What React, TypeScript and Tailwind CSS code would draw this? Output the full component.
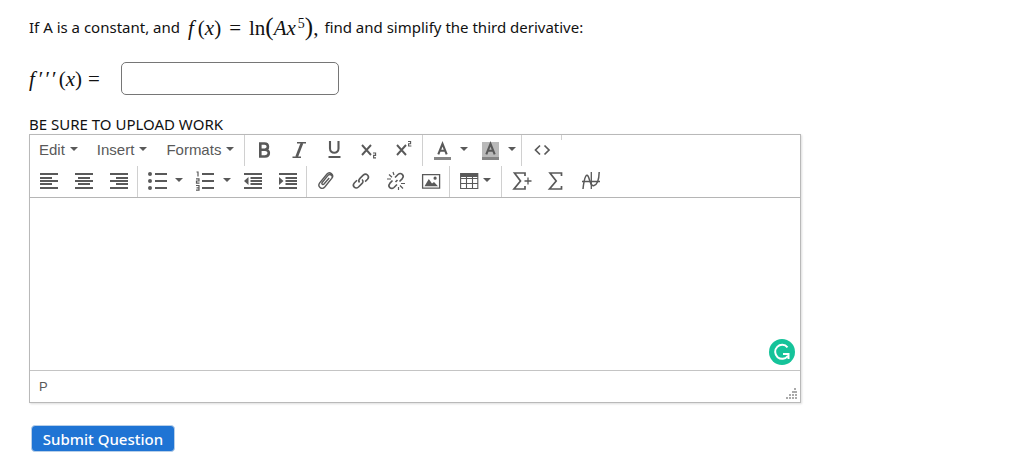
import React, { useState } from 'react';

type ToolProps = {
  label: string;
  children: React.ReactNode;
  dropdown?: boolean;
};

const Caret: React.FC = () => (
  <svg width="8" height="4" viewBox="0 0 8 4" className="mb-0.5 shrink-0 fill-[#595959]">
    <path d="M0 0h8L4 4z" />
  </svg>
);

const Icon: React.FC<{ children: React.ReactNode }> = ({ children }) => (
  <svg width="20" height="20" viewBox="0 0 20 20" fill="none" stroke="#595959" className="shrink-0">
    {children}
  </svg>
);

const Tool: React.FC<ToolProps> = ({ label, children, dropdown }) => (
  <button
    type="button"
    aria-label={label}
    className={
      dropdown
        ? 'flex h-[30px] w-12 items-center gap-2 pl-2'
        : 'flex h-[30px] w-[35px] items-center justify-center'
    }
  >
    {children}
    {dropdown && <Caret />}
  </button>
);

const Menu: React.FC<{ label: string }> = ({ label }) => (
  <button type="button" className="flex h-[30px] items-center gap-[5px] text-[15px] leading-5 text-[#595959]">
    {label}
    <Caret />
  </button>
);

const Group: React.FC<{ children: React.ReactNode; last?: boolean }> = ({ children, last }) => (
  <div className={last ? 'flex px-0.5' : 'flex border-r border-[#d0d0d0] px-px'}>{children}</div>
);

const Lines: React.FC<{ d: string }> = ({ d }) => (
  <Icon>
    <path d={d} strokeWidth="2" />
  </Icon>
);

const Toolbar: React.FC = () => (
  <div className="border-b border-[#b5b5b5] font-['Liberation_Sans',Arial,sans-serif]">
    <div className="flex h-[31px]">
      <div className="flex gap-[19px] border-r border-[#d0d0d0] pr-[10px] pl-[9px]">
        <Menu label="Edit" />
        <Menu label="Insert" />
        <Menu label="Formats" />
      </div>
      <Group>
        <Tool label="Bold">
          <Icon>
            <path d="M6 3.5h4.5c4.5 0 4.5 6 .4 6.2M6 9.7h5c5.2 0 5 6.8 0 6.8H6M6.3 2.2v15.6" strokeWidth="2.6" />
          </Icon>
        </Tool>
        <Tool label="Italic">
          <Icon>
            <path d="M8 2.7h9M3.5 17.2H12" strokeWidth="1.4" />
            <path d="M13 3L7.6 17" strokeWidth="2.7" />
          </Icon>
        </Tool>
        <Tool label="Underline">
          <Icon>
            <path d="M6 1v7.5c0 5.6 8.5 5.6 8.5 0V1" strokeWidth="2.1" />
            <path d="M4.5 17h12" strokeWidth="2" />
          </Icon>
        </Tool>
        <Tool label="Subscript">
          <Icon>
            <path d="M3 5l9 10M12 5L3 15" strokeWidth="1.9" />
            <path d="M14 13h2.6v2.4h-2v2.5H17" strokeWidth="1.1" />
          </Icon>
        </Tool>
        <Tool label="Superscript">
          <Icon>
            <path d="M3 5l9 10M12 5L3 15" strokeWidth="1.9" />
            <path d="M14 1.5h2.6v2.2h-2v2.3h2.8" strokeWidth="1.1" />
          </Icon>
        </Tool>
      </Group>
      <Group>
        <Tool label="Text color" dropdown>
          <Icon>
            <path d="M6.3 14.3l4.2-10.5 4.2 10.5M8 10.8h5" strokeWidth="2.1" />
            <path d="M2 18.5h17" stroke="#858585" strokeWidth="3" />
          </Icon>
        </Tool>
        <Tool label="Background color" dropdown>
          <Icon>
            <path d="M2 2h17v15H2z" fill="#b9b9b9" stroke="none" />
            <path d="M6.3 14.3l4.2-10.5 4.2 10.5M8 10.8h5" strokeWidth="2.1" />
            <path d="M2 18.5h17" stroke="#858585" strokeWidth="3" />
          </Icon>
        </Tool>
      </Group>
      <Group last>
        <Tool label="Source code">
          <Icon>
            <path d="M8 5.5L3.5 10 8 14.5M12.5 5.5L17 10l-4.5 4.5" strokeWidth="1.7" />
          </Icon>
        </Tool>
      </Group>
      <div className="h-[5px] border-l border-[#d0d0d0]" />
    </div>
    <div className="flex h-[31px]">
      <Group>
        <Tool label="Align left">
          <Lines d="M1 3h18M1 7h12M1 10h18M1 13h12M1 17h18" />
        </Tool>
        <Tool label="Align center">
          <Lines d="M1 3h18M4 7h12M1 10h18M4 13h12M1 17h18" />
        </Tool>
        <Tool label="Align right">
          <Lines d="M1 3h18M7 7h12M1 10h18M7 13h12M1 17h18" />
        </Tool>
      </Group>
      <Group>
        <Tool label="Bullet list" dropdown>
          <Icon>
            <path d="M8 3h12M8 10h12M8 17h12" strokeWidth="2" />
            <path d="M1 3a2 2 0 104 0 2 2 0 10-4 0M1 10a2 2 0 104 0 2 2 0 10-4 0M1 17a2 2 0 104 0 2 2 0 10-4 0" fill="#595959" stroke="none" />
          </Icon>
        </Tool>
        <Tool label="Numbered list" dropdown>
          <Icon>
            <path d="M7 3h12M7 10h12M7 17h12" strokeWidth="2" />
            <path d="M1.5 1H3v4.5M1 7.8h3v2.2H1.5v2.2H4.5M1 14.5h3v4.6H1M1.5 16.8h2.5" strokeWidth="1.2" />
          </Icon>
        </Tool>
        <Tool label="Decrease indent">
          <Icon>
            <path d="M1 3h18M7.5 7H19M7.5 10H19M7.5 13H19M1 17h18" strokeWidth="2" />
            <path d="M5.5 6v8L1 10z" fill="#595959" stroke="none" />
          </Icon>
        </Tool>
        <Tool label="Increase indent">
          <Icon>
            <path d="M1 3h18M7.5 7H19M7.5 10H19M7.5 13H19M1 17h18" strokeWidth="2" />
            <path d="M1 6v8l4.5-4z" fill="#595959" stroke="none" />
          </Icon>
        </Tool>
      </Group>
      <Group>
        <Tool label="Attach file">
          <Icon>
            <path
              d="M13.2 7L8 13c-1.1 1.2-2.8-.2-1.8-1.5L12 4.4c2-2.3 5.6.5 3.7 3L9 15.8c-3 3.5-8 0-5.3-3.9L11 3c2.6-3 7.4.5 5 4.2"
              strokeWidth="1.4"
            />
          </Icon>
        </Tool>
        <Tool label="Insert link">
          <Icon>
            <path d="M8.5 11.5c-1.5-1.6-.7-3 .7-4.4l3-3c3-2.7 7 1.1 4.3 4.1l-2.4 2.4M11 8.5c1.7 1.6 1 3-.4 4.4l-3.1 3.1c-3 2.6-6.9-1-4.2-4L6 9.3" strokeWidth="1.6" />
          </Icon>
        </Tool>
        <Tool label="Remove link">
          <Icon>
            <path d="M9 6.5l3-3c3-2.6 6.9 1 4.3 4.1L13.5 10.5M11 13.5L8 16.5c-3 2.5-6.8-1-4.2-4.1L6.5 9.5M9.5 11l2-2" strokeWidth="1.6" />
            <path d="M7 1l1 3M3 3.5l3 2.7M1 8h4M19 12.5h-4M17 17.5l-3-3M12.5 19v-3" strokeWidth="1.2" />
          </Icon>
        </Tool>
        <Tool label="Insert image">
          <Icon>
            <path d="M1.6 3.6h17v13.5h-17z" strokeWidth="1.3" />
            <path d="M3.5 15.2L7.8 8l3.2 4.5 2-1.5 4 4.2zM12.5 7.2a1.6 1.6 0 103.2 0 1.6 1.6 0 10-3.2 0" fill="#595959" stroke="none" />
          </Icon>
        </Tool>
      </Group>
      <Group>
        <button type="button" aria-label="Table" className="flex h-[30px] w-[49px] items-center gap-1 pl-2">
          <Icon>
            <path d="M2 2h17v4H2z" fill="#595959" stroke="none" />
            <path d="M1.6 2.5h17.2v15H1.6zM2 7.5h17M2 12.5h17M7.5 6v11M13.5 6v11" strokeWidth="1.1" />
          </Icon>
          <Caret />
        </button>
      </Group>
      <Group last>
        <Tool label="Insert new math">
          <Icon>
            <path d="M13 5V2H2.5l6 8-6.5 8h11v-3" strokeWidth="1.7" />
            <path d="M12.5 10h7M16 6.5v7" strokeWidth="1.3" />
          </Icon>
        </Tool>
        <Tool label="Edit math">
          <Icon>
            <path d="M14.5 5V2H3l6.2 8-6.7 8h12v-3" strokeWidth="1.7" />
          </Icon>
        </Tool>
        <Tool label="Insert graph">
          <Icon>
            <path d="M0 10.5h18M9.3 1v17" strokeWidth="1.3" />
            <path d="M1 18C2.5 4 5 2 6.5 6c2 5.5 2.5 9.5 5.5 8.5 3.5-1 5-6.5 5.2-13.5" strokeWidth="1.5" />
          </Icon>
        </Tool>
      </Group>
    </div>
  </div>
);

const App: React.FC = () => {
  const [answer, setAnswer] = useState('');

  return (
    <main className="min-h-screen bg-white px-[29px] pt-[9px] font-['Noto_Sans',sans-serif] text-[15px] leading-5 text-[#111]">
      <p className="flex h-9 items-center">
        <span>If A is a constant, and</span>
        <span className="mr-1.5 ml-2 flex items-baseline font-['Liberation_Serif',serif] text-[21px]">
          <i className="mr-1">f</i>(<i>x</i>)<span className="mx-2">=</span>ln
          <span className="text-[25px]">(</span>
          <i>Ax</i>
          <sup className="ml-0.5 text-[14px]">5</sup>
          <span className="text-[25px]">)</span>,
        </span>
        <span>find and simplify the third derivative:</span>
      </p>

      <div className="mt-[17px] flex h-[33px] items-center">
        <label htmlFor="answer" className="flex w-[92px] items-baseline font-['Liberation_Serif',serif] text-[21px]">
          <i className="mr-1">f</i>
          <span className="flex gap-0.5 pr-0.5">
            <span>′</span>
            <span>′</span>
            <span>′</span>
          </span>
          (<i>x</i>)<span className="ml-1.5">=</span>
        </label>
        <input
          id="answer"
          type="text"
          value={answer}
          onChange={e => setAnswer(e.target.value)}
          className="h-[33px] w-[218px] rounded-[5px] border border-[#767676] px-2"
        />
      </div>

      <label htmlFor="work" className="mt-[19px] block">BE SURE TO UPLOAD WORK</label>
      <div className="relative max-w-[772px] border border-[#b9b9b9] shadow-[1px_1px_2px_#ddd]">
        <Toolbar />
        <textarea id="work" className="block h-[172px] w-full resize-none p-2 outline-none" />
        <div className="flex h-8 items-center justify-between border-t border-[#c4c4c4] pl-[9px] font-['Liberation_Sans',Arial,sans-serif] text-[13px] text-[#595959]">
          <span>P</span>
          <svg width="12" height="12" viewBox="0 0 12 12" className="mr-[3px] mb-0.5 self-end fill-[#aaa]">
            <path d="M9 0h2v2H9zM7 3h2v2H7zM9 3h3v2H9zM4 6h2v2H4zM7 6h2v2H7zM10 6h2v2h-2zM1 9h2v2H1zM4 9h2v2H4zM7 9h2v2H7zM10 9h2v2h-2z" />
          </svg>
        </div>
        <button type="button" aria-label="Grammarly" className="absolute right-[5px] bottom-[37px]">
          <svg width="26" height="26" viewBox="0 0 26 26" fill="none" stroke="#fff" strokeWidth="2">
            <circle cx="13" cy="13" r="13" fill="#15c39a" stroke="none" />
            <path d="M18.5 8.3A7 7 0 1018.8 17M14 15h5.5v5" />
          </svg>
        </button>
      </div>

      <button
        type="button"
        className="mt-[22px] ml-0.5 flex h-[27px] w-36 items-center justify-center rounded-[4px] border border-[#b8cfe8] bg-[#1f74d4] font-medium text-white"
      >
        Submit Question
      </button>
    </main>
  );
};

export default App;
